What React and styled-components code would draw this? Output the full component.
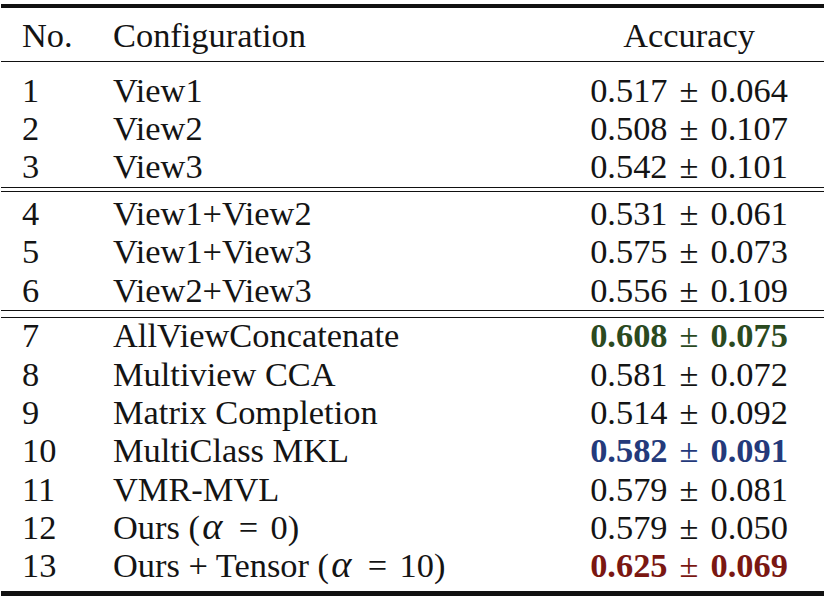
import React from "react";
import styled, { createGlobalStyle } from "styled-components";

const Global = createGlobalStyle`
  html, body { margin: 0; padding: 0; background: #ffffff; }
  body { font-family: "Liberation Serif", "Times New Roman", serif; color: #141414; }
`;

const Table = styled.div`
  margin: 4px 0 0 1px;
  width: 823px;
  border-top: 4.7px solid #111;
  border-bottom: 5.5px solid #111;
  font-size: 34.4px;
`;

const Section = styled.div`
  display: flex;
  flex-direction: column;
  gap: 8.3px;
  padding-top: ${(p) => p.$top}px;
  padding-bottom: ${(p) => p.$bottom}px;
  border-bottom: ${(p) => (p.$rule ? "1.5px solid #111" : "none")};
`;

const DoubleRule = styled.div`
  height: ${(p) => p.$gap}px;
  border-top: 1.35px solid #111;
  border-bottom: 1.35px solid #111;
`;

const Row = styled.div`
  display: grid;
  grid-template-columns: 91px 1fr 210px;
  padding: 0 30px 0 21px;
  height: 30px;
  line-height: 34px;
  white-space: nowrap;
`;

const Cell = styled.div`
  text-align: ${(p) => (p.$center ? "center" : "left")};
`;

const Value = styled.span`
  color: ${(p) => p.$color || "#141414"};
  font-weight: ${(p) => (p.$bold ? 700 : 400)};
`;

const Pm = styled.span`
  font-weight: 400;
  margin: 0 0.35em;
`;

const Mi = styled.i`
  font-style: italic;
  font-size: 1.12em;
  line-height: 0;
  margin: 0 0.1em 0 0.06em;
`;

const Op = styled.span`
  margin: 0 0.36em;
`;

const colors = {
  green: "#2b4a1f",
  blue: "#243a7b",
  red: "#7a1712",
};

const groups = [
  {
    top: 10.5,
    bottom: 7.6,
    rows: [
      ["1", "View1", "0.517", "0.064"],
      ["2", "View2", "0.508", "0.107"],
      ["3", "View3", "0.542", "0.101"],
    ],
  },
  {
    top: 4.5,
    bottom: 6.9,
    rows: [
      ["4", "View1+View2", "0.531", "0.061"],
      ["5", "View1+View3", "0.575", "0.073"],
      ["6", "View2+View3", "0.556", "0.109"],
    ],
  },
  {
    top: 0,
    bottom: 12.4,
    rows: [
      ["7", "AllViewConcatenate", "0.608", "0.075", "green"],
      ["8", "Multiview CCA", "0.581", "0.072"],
      ["9", "Matrix Completion", "0.514", "0.092"],
      ["10", "MultiClass MKL", "0.582", "0.091", "blue"],
      ["11", "VMR-MVL", "0.579", "0.081"],
      [
        "12",
        <>
          Ours (<Mi>α</Mi>
          <Op>=</Op>0)
        </>,
        "0.579",
        "0.050",
      ],
      [
        "13",
        <>
          Ours + Tensor (<Mi>α</Mi>
          <Op>=</Op>10)
        </>,
        "0.625",
        "0.069",
        "red",
      ],
    ],
  },
];

const gaps = [2.7, 6.8];

export default function App() {
  return (
    <>
      <Global />
      <Table>
        <Section $top={9.8} $bottom={13.5} $rule>
          <Row>
            <Cell>No.</Cell>
            <Cell>Configuration</Cell>
            <Cell $center>Accuracy</Cell>
          </Row>
        </Section>
        {groups.map((g, gi) => (
          <React.Fragment key={gi}>
            <Section $top={g.top} $bottom={g.bottom}>
              {g.rows.map(([no, conf, mean, sd, hl]) => (
                <Row key={no}>
                  <Cell>{no}</Cell>
                  <Cell>{conf}</Cell>
                  <Cell $center>
                    <Value $bold={!!hl} $color={hl ? colors[hl] : undefined}>
                      {mean}
                      <Pm>±</Pm>
                      {sd}
                    </Value>
                  </Cell>
                </Row>
              ))}
            </Section>
            {gi < gaps.length && <DoubleRule $gap={gaps[gi]} />}
          </React.Fragment>
        ))}
      </Table>
    </>
  );
}
